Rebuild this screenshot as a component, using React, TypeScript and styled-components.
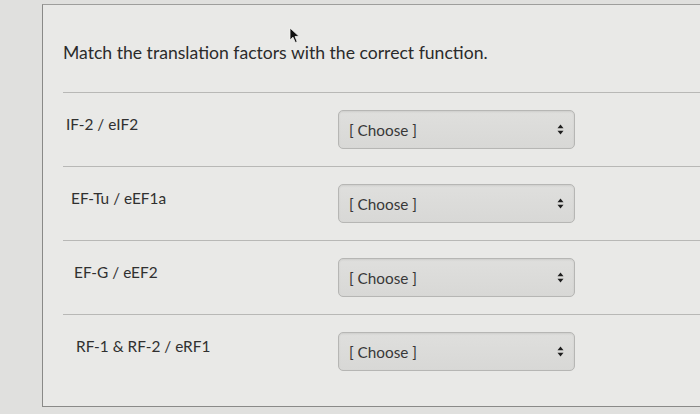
import React from "react";
import styled, { createGlobalStyle } from "styled-components";

const GlobalStyle = createGlobalStyle`
  html, body {
    margin: 0;
    padding: 0;
    background: #e0e0de;
    font-family: "Lato", "Liberation Sans", sans-serif;
    color: #2e2e2e;
  }
  #root {
    width: 700px;
    height: 414px;
    overflow: hidden;
    position: relative;
  }
`;

const Panel = styled.section`
  margin: 4px 0 0 42px;
  padding: 35px 0 18px 20px;
  background: #e9e9e7;
  border-top: 1px solid #9e9e9c;
  border-left: 1px solid #8a8a88;
  border-bottom: 1px solid #8a8a88;
`;

const Prompt = styled.p`
  margin: 0 0 27px 0;
  font-size: 17.6px;
  line-height: 25px;
  color: #2b2b2b;
`;

const Row = styled.div`
  display: grid;
  grid-template-columns: 275px 237px;
  align-items: start;
  padding: 17px 0;
  border-top: 1px solid #b8b8b6;
`;

const Label = styled.div<{ $indent: number }>`
  margin-top: 4px;
  padding-left: ${(p) => p.$indent}px;
  font-size: 15.4px;
  line-height: 20px;
  color: #303030;
`;

const SelectBox = styled.div`
  box-sizing: border-box;
  height: 39px;
  display: flex;
  align-items: center;
  justify-content: space-between;
  padding: 0 10px 0 10px;
  border: 1px solid #b6b6b4;
  border-radius: 5px;
  background: linear-gradient(180deg, #dfdfdd 0%, #d8d8d6 100%);
  box-shadow: inset 0 1px 2px rgba(0, 0, 0, 0.08);
  font-size: 15.3px;
  color: #383838;
`;

const Arrows = () => (
  <svg width="7" height="11" viewBox="0 0 7 11" aria-hidden="true">
    <path d="M3.5 0.5 L6.5 4.3 L0.5 4.3 Z" fill="#1e1e1e" />
    <path d="M3.5 10.5 L6.5 6.7 L0.5 6.7 Z" fill="#1e1e1e" />
  </svg>
);

const Pointer = styled.svg`
  position: absolute;
  left: 289px;
  top: 27px;
`;

const pairs = [
  { label: "IF-2 / eIF2", indent: 3 },
  { label: "EF-Tu / eEF1a", indent: 8 },
  { label: "EF-G / eEF2", indent: 11 },
  { label: "RF-1 & RF-2 / eRF1", indent: 13 },
];

export default function App() {
  return (
    <>
      <GlobalStyle />
      <Panel>
        <Prompt>Match the translation factors with the correct function.</Prompt>
        {pairs.map((p) => (
          <Row key={p.label}>
            <Label $indent={p.indent}>{p.label}</Label>
            <SelectBox>
              <span>[ Choose ]</span>
              <Arrows />
            </SelectBox>
          </Row>
        ))}
      </Panel>
      <Pointer width="11" height="17" viewBox="0 0 11 17" aria-hidden="true">
        <path
          d="M1 1 L1 13 L4 10.2 L6.3 15.5 L8.2 14.7 L6 9.5 L10 9.3 Z"
          fill="#111"
          stroke="#f4f4f2"
          strokeWidth="0.8"
        />
      </Pointer>
    </>
  );
}
